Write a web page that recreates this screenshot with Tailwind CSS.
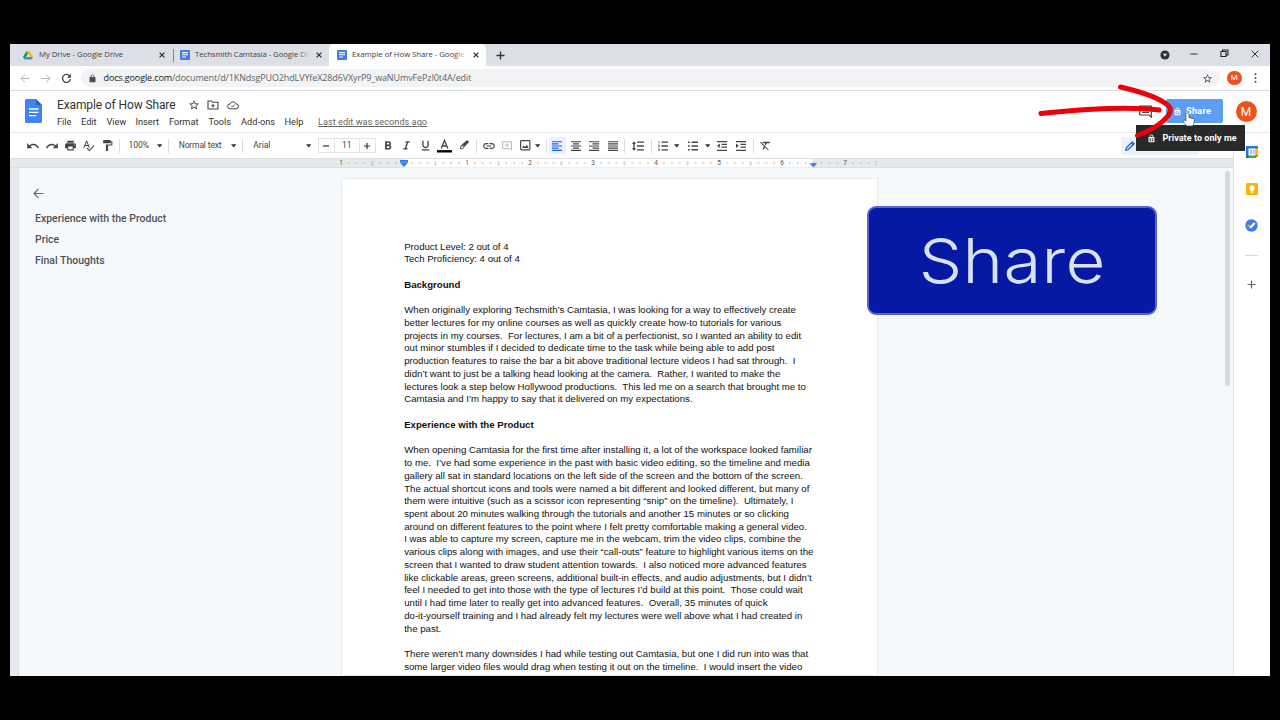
<!DOCTYPE html>
<html lang="en">
<head>
<meta charset="utf-8">
<title>Example of How Share - Google Docs</title>
<script src="https://cdn.jsdelivr.net/npm/@tailwindcss/browser@4"></script>
</head>
<body class="bg-black w-[1280px] h-[720px] overflow-hidden">
<svg class="hidden">
  <symbol id="caret" viewBox="0 0 8 5"><path d="M0 0h8L4 4.5z" fill="#333"/></symbol>
  <symbol id="gdoc" viewBox="0 0 10 10"><rect width="10" height="10" rx="1" fill="#3b7ded"/><path d="M2 2.6h6M2 4.8h6M2 7h4" stroke="#fff" stroke-width="1.1"/></symbol>
  <symbol id="x" viewBox="0 0 8 8"><path d="M1.600 1.600l4.800 4.800M6.400 1.600L1.600 6.400" stroke="#333" stroke-width="1.300"/></symbol>
  <symbol id="lock" viewBox="0 0 24 24"><path d="M18 8h-1V6c0-2.800-2.200-5-5-5S7 3.200 7 6v2H6c-1.100 0-2 .9-2 2v10c0 1.100.9 2 2 2h12c1.100 0 2-.9 2-2V10c0-1.100-.9-2-2-2zM9 6c0-1.700 1.300-3 3-3s3 1.300 3 3v2H9z"/></symbol>
  <symbol id="lockd" viewBox="0 0 24 24"><path fill-rule="evenodd" d="M18 8h-1V6c0-2.800-2.200-5-5-5S7 3.200 7 6v2H6c-1.100 0-2 .9-2 2v10c0 1.100.9 2 2 2h12c1.100 0 2-.9 2-2V10c0-1.100-.9-2-2-2zM9 6c0-1.700 1.300-3 3-3s3 1.300 3 3v2H9zM7 11v8.500h10V11zM12 12.200a3 3 0 1 1 0 6 3 3 0 0 1 0-6z"/></symbol>
  <symbol id="star" viewBox="0 0 24 24"><path d="M22 9.240l-7.190-.62L12 2 9.190 8.630 2 9.240l5.460 4.730L5.820 21 12 17.270 18.180 21l-1.630-7.030L22 9.240zM12 15.400l-3.760 2.270 1-4.280-3.320-2.880 4.380-.38L12 6.100l1.710 4.040 4.380.38-3.320 2.880 1 4.280L12 15.400z"/></symbol>
</svg>

<main class="ml-[10px] mt-[44px] w-[1260px] h-[631.500px] overflow-hidden bg-white flex flex-col relative font-['Roboto','Liberation_Sans',sans-serif] text-[#444]">

  <!-- Browser tabs -->
  <div class="h-[22px] shrink-0 bg-[#dcdfe5] flex items-center font-['Open_Sans','Noto_Sans',sans-serif] text-[7.700px] text-[#3c4043] whitespace-nowrap">
    <div class="w-[162.500px] h-full flex items-center pl-[13px]">
      <svg class="w-[10px] h-[9px] mr-[6px] shrink-0" viewBox="0 0 20 18"><path d="M7 0h6l7 12h-6z" fill="#fbbc04"/><path d="M7 0l3 5L3 17 0 12z" fill="#0f9d58"/><path d="M6 12h14l-3 5H3z" fill="#4285f4"/></svg>
      <span class="grow">My Drive - Google Drive</span>
      <svg class="w-[8px] h-[8px] mr-[7px]"><use href="#x"/></svg>
    </div>
    <div class="w-[156.500px] h-full flex items-center">
      <div class="w-px h-[13px] bg-[#85888e]"></div>
      <svg class="w-[10px] h-[10px] ml-[6.500px] mr-[5px] shrink-0"><use href="#gdoc"/></svg>
      <span class="w-[114.500px] overflow-hidden relative tracking-[-0.030px]">Techsmith Camtasia - Google Do<i class="absolute right-0 top-0 h-full w-[12px] bg-linear-to-r from-[#dcdfe5]/0 to-[#dcdfe5]"></i></span>
      <svg class="w-[8px] h-[8px] ml-[5px]"><use href="#x"/></svg>
    </div>
    <div class="w-[157px] h-full flex items-center bg-white rounded-t-[5px]">
      <svg class="w-[10px] h-[10px] ml-[8px] mr-[5px] shrink-0"><use href="#gdoc"/></svg>
      <span class="w-[115px] overflow-hidden relative">Example of How Share - Google<i class="absolute right-0 top-0 h-full w-[12px] bg-linear-to-r from-white/0 to-white"></i></span>
      <svg class="w-[8px] h-[8px] ml-[4.500px]"><use href="#x"/></svg>
    </div>
    <svg class="w-[9px] h-[9px] ml-[10px]" viewBox="0 0 9 9"><path d="M4.500.5v8M.5 4.500h8" stroke="#333" stroke-width="1.300"/></svg>
    <div class="ml-auto flex items-center h-full pr-[11.500px]">
      <svg class="w-[10px] h-[10px] mr-[20px]" viewBox="0 0 10 10"><circle cx="5" cy="5" r="4.600" fill="#303338"/><path d="M2.700 3.800h4.600L5 6.800z" fill="#dcdfe5"/></svg>
      <svg class="w-[8px] h-[9px] mr-[22px] -mt-[4px]" viewBox="0 0 8 9"><path d="M.5 5h7" stroke="#333"/></svg>
      <svg class="w-[9px] h-[9px] mr-[21.500px] -mt-[3px]" viewBox="0 0 9 9"><path d="M1 2.500h5v5H1zM2.500 2.500V1h5.500v5H6" fill="none" stroke="#222" stroke-width="1.100"/></svg>
      <svg class="w-[8px] h-[8px] -mt-[3px]" viewBox="0 0 8 8"><path d="M.7.7l6.600 6.600M7.300.7L.7 7.300" stroke="#333"/></svg>
    </div>
  </div>

  <!-- Address bar -->
  <div class="h-[25px] shrink-0 border-b border-[#dadce0] flex items-center">
    <svg class="w-[10px] h-[9px] ml-[10px]" viewBox="0 0 10 9"><path d="M9.500 4.500H1M5 .7L1 4.500l4 3.800" fill="none" stroke="#b4b6b9"/></svg>
    <svg class="w-[10px] h-[9px] ml-[11px]" viewBox="0 0 10 9"><path d="M.5 4.500H9M5 .7l4 3.800-4 3.800" fill="none" stroke="#b4b6b9"/></svg>
    <svg class="w-[11px] h-[11px] ml-[10px]" viewBox="0 0 11 11"><path d="M9.400 6.200A4 4 0 1 1 8.500 2.800" fill="none" stroke="#3f4246" stroke-width="1.300"/><path d="M9.900.8v4H6z" fill="#3f4246"/></svg>
    <div class="h-[18px] w-[1139px] ml-[8.500px] rounded-full bg-[#f1f3f4] flex items-center">
      <svg class="w-[9px] h-[9px] ml-[7.500px] fill-[#4b4e52]"><use href="#lock"/></svg>
      <span class="ml-[6.500px] font-['Open_Sans','Noto_Sans',sans-serif] text-[9px] tracking-[-0.120px] text-[#5f6368] whitespace-nowrap"><span class="text-[#202124]">docs.google.com</span>/document/d/1KNdsgPUO2hdLVYfeX28d6VXyrP9_waNUmvFePzI0t4A/edit</span>
      <svg class="w-[11px] h-[11px] ml-auto mr-[6.500px] fill-[#4b4e52]"><use href="#star"/></svg>
    </div>
    <div class="size-[14.500px] rounded-full bg-[#f0511d] text-white text-[8px] flex items-center justify-center ml-[7.500px]">M</div>
    <svg class="w-[3px] h-[10px] ml-[12.500px]" viewBox="0 0 3 10"><g fill="#44474b"><circle cx="1.500" cy="1.300" r="1"/><circle cx="1.500" cy="5" r="1"/><circle cx="1.500" cy="8.700" r="1"/></g></svg>
  </div>

  <!-- Document header -->
  <header class="h-[42px] shrink-0 border-b border-[#e3e5e8] flex">
    <svg class="w-[17px] h-[24px] ml-[15px] mt-[8px] shrink-0" viewBox="0 0 17 24"><path d="M1.500 0H11l6 6v16.500a1.500 1.500 0 0 1-1.500 1.500h-14A1.500 1.500 0 0 1 0 22.500v-21A1.500 1.500 0 0 1 1.500 0z" fill="#3f84f4"/><path d="M11 0l6 6h-6z" fill="#2560c8"/><path d="M4 10h9.500M4 13.300h9.500M4 16.600h7" stroke="#fff" stroke-width="1.300"/></svg>
    <div class="ml-[12px] pt-[6px] flex flex-col whitespace-nowrap">
      <div class="flex items-center h-[16px] pl-[3px]">
        <span class="text-[12px] tracking-[-0.120px] text-[#333] w-[131px]">Example of How Share</span>
        <svg class="w-[12px] h-[12px] mr-[7px] fill-[#444]"><use href="#star"/></svg>
        <svg class="w-[12px] h-[12px] mr-[8px]" viewBox="0 0 12 12"><path d="M1 2h3.500l1 1.300H11V10H1zM6 5v3.400M4.300 6.700h3.400" fill="none" stroke="#444" stroke-width="1.100"/></svg>
        <svg class="w-[12px] h-[12px]" viewBox="0 0 12 12"><path d="M3.200 9.800a2.400 2.400 0 0 1-.2-4.800 3.200 3.200 0 0 1 6-.2 2.500 2.500 0 0 1 0 5zM4.300 6.700l1.300 1.300 2.300-2.500" fill="none" stroke="#444"/></svg>
      </div>
      <nav class="flex items-center h-[18px] text-[9.200px] tracking-[0.010px] text-[#333]">
        <span class="w-[24px] pl-[3px]">File</span><span class="w-[25.500px] pl-[3px]">Edit</span><span class="w-[29px] pl-[3px]">View</span><span class="w-[33.500px] pl-[3px]">Insert</span><span class="w-[39.500px] pl-[3px]">Format</span><span class="w-[32.500px] pl-[3px]">Tools</span><span class="w-[43.500px] pl-[3px]">Add-ons</span><span class="w-[33.500px] pl-[3px]">Help</span><span class="pl-[3px] underline text-[#666]">Last edit was seconds ago</span>
      </nav>
    </div>
    <div class="ml-auto flex items-center pr-[13.500px]">
      <svg class="w-[13px] h-[13px] mr-[13.500px]" viewBox="0 0 13 13"><path d="M.7 1.200h11.600v11l-2.200-2.200H.7zM3 3.700h7M3 5.600h7M3 7.500h7" fill="none" stroke="#444" stroke-width="1.200"/></svg>
      <div class="w-[57px] h-[24px] -mt-px rounded-[2px] bg-[#5c9df5] text-white text-[9.300px] font-bold flex items-center tracking-[0.200px]">
        <svg class="w-[9px] h-[9px] ml-[7.500px] mr-[4px] fill-white"><use href="#lockd"/></svg>Share
      </div>
      <div class="size-[21px] rounded-full bg-[#f0511d] text-white text-[12px] flex items-center justify-center ml-[13px]">M</div>
    </div>
  </header>

  <div class="flex grow min-h-0">
    <div class="w-[1223px] flex flex-col min-h-0">

      <!-- Formatting toolbar -->
      <div class="h-[25px] shrink-0 flex items-center pl-[13.750px] text-[8.500px] text-[#444] whitespace-nowrap [&_svg]:shrink-0">
        <div class="w-[18.500px] flex justify-center"><svg class="size-[14px] fill-[#444]" viewBox="0 0 24 24"><path d="M12.500 8c-2.650 0-5.050.99-6.900 2.600L2 7v9h9l-3.620-3.620c1.390-1.160 3.160-1.880 5.120-1.880 3.540 0 6.550 2.310 7.600 5.500l2.370-.78C21.080 11.030 17.150 8 12.500 8z"/></svg></div>
        <div class="w-[18.500px] flex justify-center"><svg class="size-[14px] fill-[#444]" viewBox="0 0 24 24"><path d="M18.400 10.600C16.550 8.990 14.150 8 11.500 8c-4.650 0-8.580 3.030-9.960 7.220L3.900 16c1.050-3.190 4.050-5.500 7.600-5.500 1.950 0 3.730.72 5.120 1.880L13 16h9V7l-3.600 3.600z"/></svg></div>
        <div class="w-[18.500px] flex justify-center"><svg class="size-[13px] fill-[#444]" viewBox="0 0 24 24"><path d="M19 8H5c-1.660 0-3 1.340-3 3v6h4v4h12v-4h4v-6c0-1.660-1.340-3-3-3zm-3 11H8v-5h8v5zm3-7c-.55 0-1-.45-1-1s.45-1 1-1 1 .45 1 1-.45 1-1 1zm-1-9H6v4h12V3z"/></svg></div>
        <div class="w-[18.500px] flex justify-center"><svg class="size-[13px] fill-[#444]" viewBox="0 0 24 24"><path d="M12.450 16h2.090L9.430 3H7.570L2.460 16h2.090l1.120-3h5.640l1.140 3zm-6.020-5L8.500 5.480 10.570 11H6.430zm15.160.59l-8.090 8.090L9.830 16l-1.410 1.410 5.090 5.090L23 13l-1.410-1.410z"/></svg></div>
        <div class="w-[18.500px] flex justify-center"><svg class="size-[13px] fill-[#444]" viewBox="0 0 24 24"><path d="M18 4V3c0-.55-.45-1-1-1H5c-.55 0-1 .45-1 1v4c0 .55.45 1 1 1h12c.55 0 1-.45 1-1V6h1v4H9v11c0 .55.45 1 1 1h2c.55 0 1-.45 1-1v-9h8V4h-3z"/></svg></div>
        <div class="w-[6.500px] flex justify-center"><i class="w-px h-[14px] bg-[#dadce0]"></i></div>
        <div class="w-[32px] text-center">100%</div>
        <div class="w-[9px] flex justify-center"><svg class="w-[5.500px] h-[4px]"><use href="#caret"/></svg></div>
        <div class="w-[9px] flex justify-center"><i class="w-px h-[14px] bg-[#dadce0]"></i></div>
        <div class="w-[56px] pl-[6px] tracking-[-0.150px]">Normal text</div>
        <div class="w-[10.500px] flex justify-center"><svg class="w-[5.500px] h-[4px]"><use href="#caret"/></svg></div>
        <div class="w-[6.500px] flex justify-center"><i class="w-px h-[14px] bg-[#dadce0]"></i></div>
        <div class="w-[57px] pl-[7.500px]">Arial</div>
        <div class="w-[11px] flex justify-center"><svg class="w-[5.500px] h-[4px]"><use href="#caret"/></svg></div>
        <div class="w-[57.500px] h-[15px] ml-[4.250px] mr-[3.250px] border border-[#e0e2e4] flex items-center">
          <div class="w-[15px] flex justify-center"><svg class="w-[6px] h-[6px]" viewBox="0 0 6 6"><path d="M0 3h6" stroke="#333" stroke-width="1.200"/></svg></div>
          <div class="w-[27px] h-full border-x border-[#e0e2e4] flex items-center justify-center">11</div>
          <div class="w-[15px] flex justify-center"><svg class="w-[6px] h-[6px]" viewBox="0 0 6 6"><path d="M0 3h6M3 0v6" stroke="#333" stroke-width="1.200"/></svg></div>
        </div>
        <div class="w-[18.750px] flex justify-center"><svg class="size-[14px] fill-[#444]" viewBox="0 0 24 24"><path d="M15.600 10.790c.97-.67 1.650-1.770 1.650-2.790 0-2.260-1.750-4-4-4H7v14h7.040c2.090 0 3.710-1.700 3.710-3.790 0-1.520-.86-2.820-2.150-3.420zM10 6.500h3c.83 0 1.500.67 1.500 1.500s-.67 1.500-1.500 1.500h-3v-3zm3.500 9H10v-3h3.500c.83 0 1.500.67 1.500 1.500s-.67 1.500-1.500 1.500z"/></svg></div>
        <div class="w-[18.750px] flex justify-center"><svg class="size-[13px] fill-[#444]" viewBox="0 0 24 24"><path d="M10 4v2.500h2.500L8.800 17H6v2.500h8V17h-2.500l3.700-10.500H18V4z"/></svg></div>
        <div class="w-[18.750px] flex justify-center"><svg class="size-[13px] fill-[#444]" viewBox="0 0 24 24"><path d="M12 17c3.310 0 6-2.690 6-6V3h-2.500v8c0 1.930-1.570 3.500-3.500 3.500S8.500 12.930 8.500 11V3H6v8c0 3.310 2.690 6 6 6zm-7 2v2h14v-2H5z"/></svg></div>
        <div class="w-[18.750px] flex justify-center"><svg class="w-[15px] h-[14px]" viewBox="0 0 15 14"><path d="M4.200 9.500L7.500 1.500l3.300 8M5.300 7h4.400" fill="none" stroke="#444" stroke-width="1.300"/><path d="M0 12.300h15" stroke="#000" stroke-width="2.400"/></svg></div>
        <div class="w-[18.750px] flex justify-center pl-px"><svg class="size-[12px] -mt-[2px]" viewBox="0 0 12 12"><path d="M9.200 1l1.900 1.900L6.300 8 3.800 5.500z" fill="#444"/><path d="M3.500 6l2.400 2.400L4.600 9.600H2.200z" fill="none" stroke="#444"/></svg></div>
        <div class="w-[7px] flex justify-center"><i class="w-px h-[14px] bg-[#dadce0]"></i></div>
        <div class="w-[18.500px] flex justify-center"><svg class="size-[14px] fill-[#444]" viewBox="0 0 24 24"><path d="M3.900 12c0-1.710 1.390-3.100 3.100-3.100h4V7H7c-2.760 0-5 2.240-5 5s2.240 5 5 5h4v-1.900H7c-1.710 0-3.100-1.390-3.100-3.100zM8 13h8v-2H8v2zm9-6h-4v1.900h4c1.710 0 3.100 1.390 3.100 3.100s-1.390 3.100-3.100 3.100h-4V17h4c2.760 0 5-2.240 5-5s-2.240-5-5-5z"/></svg></div>
        <div class="w-[18.500px] flex justify-center"><svg class="size-[10px]" viewBox="0 0 10 10"><path d="M.6.8h8.800v8.400L7.800 7.600H.6zM5 2.300v3.800M3.100 4.200h3.800" fill="none" stroke="#b5b7b9"/></svg></div>
        <div class="w-[17.500px] flex justify-center"><svg class="size-[10.500px]" viewBox="0 0 10 10"><rect x=".6" y=".6" width="8.800" height="8.800" rx=".8" fill="none" stroke="#444" stroke-width="1.100"/><path d="M2 7.500l1.700-2.200 1.200 1.400L6.500 4.600 8.200 7.500z" fill="#444"/></svg></div>
        <div class="w-[7px] flex justify-center"><svg class="w-[5.500px] h-[4px]"><use href="#caret"/></svg></div>
        <div class="w-[7px] pl-[4.500px] flex"><i class="w-px h-[14px] bg-[#dadce0]"></i></div>
        <div class="w-[18.500px] flex justify-center"><div class="w-[17px] h-[17px] rounded-[2px] bg-[#e8f0fe] flex items-center justify-center"><svg class="size-[10px]" viewBox="0 0 10 10"><path d="M0 .7h10M0 2.850h6.500M0 5h10M0 7.150h6.500M0 9.300h10" stroke="#1a66e0" stroke-width="1.150"/></svg></div></div>
        <div class="w-[18.500px] flex justify-center"><svg class="size-[10px]" viewBox="0 0 10 10"><path d="M0 .7h10M2 2.850h6M0 5h10M2 7.150h6M0 9.300h10" stroke="#444" stroke-width="1.150"/></svg></div>
        <div class="w-[18.500px] flex justify-center"><svg class="size-[10px]" viewBox="0 0 10 10"><path d="M0 .7h10M3.500 2.850H10M0 5h10M3.500 7.150H10M0 9.300h10" stroke="#444" stroke-width="1.150"/></svg></div>
        <div class="w-[18.500px] flex justify-center"><svg class="size-[10px]" viewBox="0 0 10 10"><path d="M0 .7h10M0 2.850h10M0 5h10M0 7.150h10M0 9.300h10" stroke="#444" stroke-width="1.150"/></svg></div>
        <div class="w-[5px] flex justify-center"><i class="w-px h-[14px] bg-[#dadce0]"></i></div>
        <div class="w-[22px] flex justify-center"><svg class="w-[12px] h-[10px]" viewBox="0 0 12 10"><path d="M5 1.200h7M5 5h7M5 8.800h7M2 1.500v7" stroke="#444" stroke-width="1.300"/><path d="M0 3L2 .2 4 3zM0 7l2 2.800L4 7z" fill="#444"/></svg></div>
        <div class="w-[4px] flex justify-center"><i class="w-px h-[14px] bg-[#dadce0]"></i></div>
        <div class="w-[20px] flex justify-center"><svg class="w-[10px] h-[10px]" viewBox="0 0 10 10"><path d="M3.500 1.200H10M3.500 5H10M3.500 8.800H10" stroke="#444" stroke-width="1.300"/><path d="M0 .5h1v2M0 4h1.600L.2 6h1.600M0 7.700h1.600v2H0M.5 8.700h1" fill="none" stroke="#555" stroke-width=".6"/></svg></div>
        <div class="w-[8px] flex justify-center"><svg class="w-[5.500px] h-[4px]"><use href="#caret"/></svg></div>
        <div class="w-[23px] flex justify-center"><svg class="w-[10px] h-[10px]" viewBox="0 0 10 10"><path d="M3.500 1.200H10M3.500 5H10M3.500 8.800H10M0 1.200h1.700M0 5h1.700M0 8.800h1.700" stroke="#444" stroke-width="1.400"/></svg></div>
        <div class="w-[9px] flex pl-[0.500px]"><svg class="w-[5.500px] h-[4px]"><use href="#caret"/></svg></div>
        <div class="w-[18.500px] flex justify-center"><svg class="size-[10px]" viewBox="0 0 10 10"><path d="M0 .7h10M4.500 3.400H10M4.500 6.100H10M0 9.300h10" stroke="#444" stroke-width="1.250"/><path d="M2.800 2.600v4.400L0 4.800z" fill="#444"/></svg></div>
        <div class="w-[18.500px] flex justify-center"><svg class="size-[10px]" viewBox="0 0 10 10"><path d="M0 .7h10M4.500 3.400H10M4.500 6.100H10M0 9.300h10" stroke="#444" stroke-width="1.250"/><path d="M0 2.600v4.400l2.800-2.200z" fill="#444"/></svg></div>
        <div class="w-[6px] flex justify-center"><i class="w-px h-[14px] bg-[#dadce0]"></i></div>
        <div class="w-[19px] flex justify-center"><svg class="size-[13px] fill-[#444]" viewBox="0 0 24 24"><path d="M3.270 5L2 6.270l6.970 6.970L6.500 19h3l1.570-3.660L16.730 21 18 19.730 3.550 5.270 3.270 5zM6 5v.18L8.820 8h2.400l-.72 1.680 2.100 2.100L14.210 8H20V5H6z"/></svg></div>
        <div class="ml-auto w-[78px] h-[18px] bg-[#eaf2fe] rounded-[2px] flex items-center mr-[34px]"><svg class="size-[10px] ml-[4px]" viewBox="0 0 10 10"><path d="M.9 9.100l.4-2.200L7.300.9l1.800 1.800-6 6zM6.200 2.100l1.700 1.700" fill="none" stroke="#1a5fd0" stroke-width="1.300"/></svg></div>
      </div>

      <!-- Ruler -->
      <div class="h-[10px] shrink-0 bg-[#e6e8ea]">
        <svg class="block w-[1223px] h-[10px] overflow-visible" viewBox="10 158 1223 10" font-family="Roboto, sans-serif" font-size="6.500" fill="#555" text-anchor="middle">
          <defs><pattern id="ticks" x="340.800" y="158" width="63.040" height="10" patternUnits="userSpaceOnUse"><path d="M7.880 4v2M15.760 4v2M23.640 4v2M39.400 4v2M47.280 4v2M55.160 4v2" stroke="#a9acaf" stroke-width=".8"/><path d="M31.520 3v4.500" stroke="#999" stroke-width=".8"/></pattern></defs>
          <path d="M10 158.500h1223M10 167.600h1223" stroke="#d9dbde" stroke-width=".8"/>
          <rect x="404" y="159" width="409" height="8.500" fill="#fff"/>
          <rect x="340.800" y="158" width="536" height="10" fill="url(#ticks)"/>
          <text x="341" y="165.400">1</text><text x="467" y="165.400">1</text><text x="530" y="165.400">2</text><text x="593" y="165.400">3</text><text x="656" y="165.400">4</text><text x="719" y="165.400">5</text><text x="782" y="165.400">6</text><text x="845" y="165.400">7</text>
          <path d="M400 160h8v2.500l-4 4.500-4-4.500z" fill="#3478ec"/><path d="M400 162.300h8" stroke="#9dc0fa" stroke-width=".6"/>
          <path d="M809.300 163.300h8l-4 4z" fill="#3478ec"/>
        </svg>
      </div>

      <!-- Canvas -->
      <div class="flex grow min-h-0 bg-[#f6f9fb]">
        <div class="w-[9px] bg-[#e8e9ef] border-r border-[#dddfe3] shrink-0"></div>
        <aside class="w-[321.500px] shrink-0 pt-[20px] pl-[14px]">
          <svg class="w-[11px] h-[11px]" viewBox="0 0 11 11"><path d="M10.500 5.500H1M5.500.9L1 5.500l4.500 4.600" fill="none" stroke="#666a6e" stroke-width="1.200"/></svg>
          <div class="pl-[2px] pt-[9px] text-[10.500px] font-medium leading-[21px] text-[#4f5357] whitespace-nowrap">
            <div>Experience with the Product</div><div>Price</div><div>Final Thoughts</div>
          </div>
        </aside>
        <article class="w-[537px] shrink-0 mt-[10px] bg-white border border-[#e9ecee] pt-[61.600px] pl-[62.700px] font-['Liberation_Sans',Arial,sans-serif] text-[9.640px] leading-[12.735px] text-[#111] whitespace-pre overflow-hidden">Product Level: 2 out of 4
Tech Proficiency: 4 out of 4

<b>Background</b>

When originally exploring Techsmith’s Camtasia, I was looking for a way to effectively create
better lectures for my online courses as well as quickly create how-to tutorials for various
projects in my courses.  For lectures, I am a bit of a perfectionist, so I wanted an ability to edit
out minor stumbles if I decided to dedicate time to the task while being able to add post
production features to raise the bar a bit above traditional lecture videos I had sat through.  I
didn’t want to just be a talking head looking at the camera.  Rather, I wanted to make the
lectures look a step below Hollywood productions.  This led me on a search that brought me to
Camtasia and I’m happy to say that it delivered on my expectations.

<b>Experience with the Product</b>

When opening Camtasia for the first time after installing it, a lot of the workspace looked familiar
to me.  I’ve had some experience in the past with basic video editing, so the timeline and media
gallery all sat in standard locations on the left side of the screen and the bottom of the screen.
The actual shortcut icons and tools were named a bit different and looked different, but many of
them were intuitive (such as a scissor icon representing “snip” on the timeline).  Ultimately, I
spent about 20 minutes walking through the tutorials and another 15 minutes or so clicking
around on different features to the point where I felt pretty comfortable making a general video.
I was able to capture my screen, capture me in the webcam, trim the video clips, combine the
various clips along with images, and use their “call-outs” feature to highlight various items on the
screen that I wanted to draw student attention towards.  I also noticed more advanced features
like clickable areas, green screens, additional built-in effects, and audio adjustments, but I didn’t
feel I needed to get into those with the type of lectures I’d build at this point.  Those could wait
until I had time later to really get into advanced features.  Overall, 35 minutes of quick
do-it-yourself training and I had already felt my lectures were well above what I had created in
the past.

There weren’t many downsides I had while testing out Camtasia, but one I did run into was that
some larger video files would drag when testing it out on the timeline.  I would insert the video</article>
        <div class="ml-auto mr-[3px] mt-[3px] w-[5px] h-[215px] rounded-full bg-[#d5d9db]"></div>
      </div>
    </div>

    <!-- Side panel -->
    <div class="w-[37px] border-l border-[#dfe1e5] flex flex-col items-center pt-[12.500px] pr-px">
      <svg class="size-[12px]" viewBox="0 0 12 12"><path d="M0 0h12v12H0z" fill="#2a74e8"/><path d="M9.500 2.500H12v7H9.500z" fill="#fbbc04"/><path d="M2.500 9.500h7V12h-7z" fill="#34a853"/><path d="M0 9.500h2.500V12H0z" fill="#188038"/><path d="M9.500 9.500H12L9.500 12z" fill="#ea4335"/><path d="M12 9.700V12H9.700z" fill="#fff"/><path d="M2.500 2.500h7v7h-7z" fill="#fff"/><path d="M4 4.300h1.600v3.500H4M4.300 6h1.200M7 4.500l.9-.3v3.700" fill="none" stroke="#4285f4" stroke-width=".7"/></svg>
      <svg class="size-[12px] mt-[25px]" viewBox="0 0 12 12"><rect width="12" height="12" rx="1" fill="#fbb605"/><circle cx="6" cy="5" r="2.600" fill="#fff"/><path d="M4.800 7h2.400v2.700H4.800z" fill="#fff"/><path d="M4.600 8.100h2.800" stroke="#fbb605" stroke-width=".6"/></svg>
      <svg class="size-[13px] mt-[24px]" viewBox="0 0 13 13"><circle cx="6.500" cy="6.500" r="6.200" fill="#3f7de8"/><path d="M5 8.800L9.700 3.900" stroke="#fff" stroke-width="2.200"/><circle cx="3.500" cy="6.700" r="1.100" fill="#fbbc04"/></svg>
      <div class="w-[13px] h-px bg-[#d5d7da] mt-[23px]"></div>
      <svg class="size-[9px] mt-[24px]" viewBox="0 0 9 9"><path d="M4.500.5v8M.5 4.500h8" stroke="#5f6368" stroke-width="1.200"/></svg>
    </div>
  </div>

  <!-- Tooltip -->
  <div class="absolute left-[1126px] top-[81px] w-[109px] h-[26px] pt-px bg-[#292929] text-white text-[9px] font-bold flex items-center whitespace-nowrap">
    <svg class="size-[9px] ml-[10.500px] mr-[7px] shrink-0 fill-white"><use href="#lockd"/></svg><span class="tracking-[0.060px]">Private to only me</span>
  </div>

  <!-- Callout -->
  <div class="absolute left-[857px] top-[162px] w-[290px] h-[109px] rounded-[9px] border-2 border-[#5a62d4] bg-[#0519a4] flex items-center justify-center">
    <span class="font-['Inter','Lato',sans-serif] font-light text-[62px] leading-none tracking-[0.300px] scale-x-[1.110] text-[#d7e2f2] mt-px">Share</span>
  </div>

  <!-- Arrow annotation and pointer -->
  <svg class="absolute left-[1020px] top-[36px] w-[220px] h-[70px]" viewBox="1030 80 220 70">
    <path d="M1041 113.500C1080 109.500 1125 106 1159 110" fill="none" stroke="#ee0008" stroke-width="5" stroke-linecap="round"/>
    <path d="M1120.500 87C1142 92 1163 99 1170 107.500C1173 114 1160 127 1137.500 135.500" fill="none" stroke="#ee0008" stroke-width="5" stroke-linecap="round" stroke-linejoin="round"/>
    <path d="M1187.500 113c.9 0 1.500.6 1.500 1.500v3.200l4 .8c1 .3 1.500 1 1.400 2l-.6 3.400-1 2.100h-6.300l-3-4.200c-.8-1.300.3-2.300 1.500-1.500l.9.900v-6.700c0-.9.700-1.500 1.600-1.500z" fill="#fff" stroke="#333" stroke-width=".6"/>
  </svg>
</main>
</body>
</html>
